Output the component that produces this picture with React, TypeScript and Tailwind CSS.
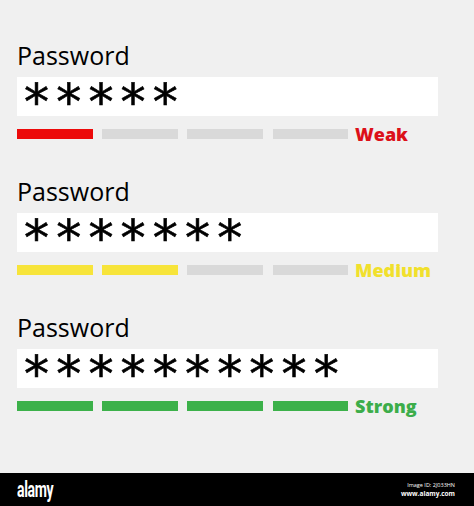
const levels = [
  {
    count: 5,
    filled: 1,
    label: "Weak",
    barOn: "bg-[#ec0a0a]",
    textColor: "text-[#dc1019]",
  },
  {
    count: 7,
    filled: 2,
    label: "Medium",
    barOn: "bg-[#f7e43a]",
    textColor: "text-[#f1e02c]",
  },
  {
    count: 10,
    filled: 4,
    label: "Strong",
    barOn: "bg-[#3cb14a]",
    textColor: "text-[#3cad4a]",
  },
];

function StrengthField({
  count,
  filled,
  label,
  barOn,
  textColor,
}: (typeof levels)[number]) {
  return (
    <section className="flex flex-col">
      <h2 className="font-['Open_Sans',sans-serif] text-[25px] leading-[30px] text-black">
        Password
      </h2>
      <div className="mt-[7px] flex h-[39px] items-start gap-[10.2px] bg-white pl-[7px]">
        {Array.from({ length: count }).map((_, i) => (
          <span
            key={i}
            className="w-[22px] translate-y-[6px] text-center font-['DejaVu_Sans',sans-serif] text-[50px] leading-[39px] text-black [-webkit-text-stroke:0.6px_black]"
          >
            *
          </span>
        ))}
      </div>
      <div className="mt-[13px] flex h-[10px] items-center">
        <div className="flex h-full gap-[9.7px]">
          {[0, 1, 2, 3].map((i) => (
            <div
              key={i}
              className={`h-full w-[75.5px] ${i < filled ? barOn : "bg-[#d9d9d9]"}`}
            />
          ))}
        </div>
        <span
          className={`ml-[7px] font-['Open_Sans',sans-serif] text-[18px] font-extrabold leading-none ${textColor}`}
        >
          {label}
        </span>
      </div>
    </section>
  );
}

export default function App() {
  return (
    <div className="flex h-[506px] w-[474px] flex-col bg-[#f0f0f0]">
      <main className="flex flex-1 flex-col gap-[37px] pl-[17px] pr-[36px] pt-[40px]">
        {levels.map((level) => (
          <StrengthField key={level.label} {...level} />
        ))}
      </main>

      <footer className="flex h-[33px] items-center justify-between bg-black pl-[17px] pr-[19px]">
        <span className="inline-block origin-left scale-x-[0.64] font-['Roboto',sans-serif] text-[22px] font-bold leading-none tracking-tight text-white">
          alamy
        </span>
        <div className="flex flex-col items-end font-['Open_Sans',sans-serif] text-white">
          <span className="text-[5.5px] leading-[7px]">Image ID: 2J033HN</span>
          <span className="text-[6.5px] font-bold leading-[9px]">www.alamy.com</span>
        </div>
      </footer>
    </div>
  );
}
